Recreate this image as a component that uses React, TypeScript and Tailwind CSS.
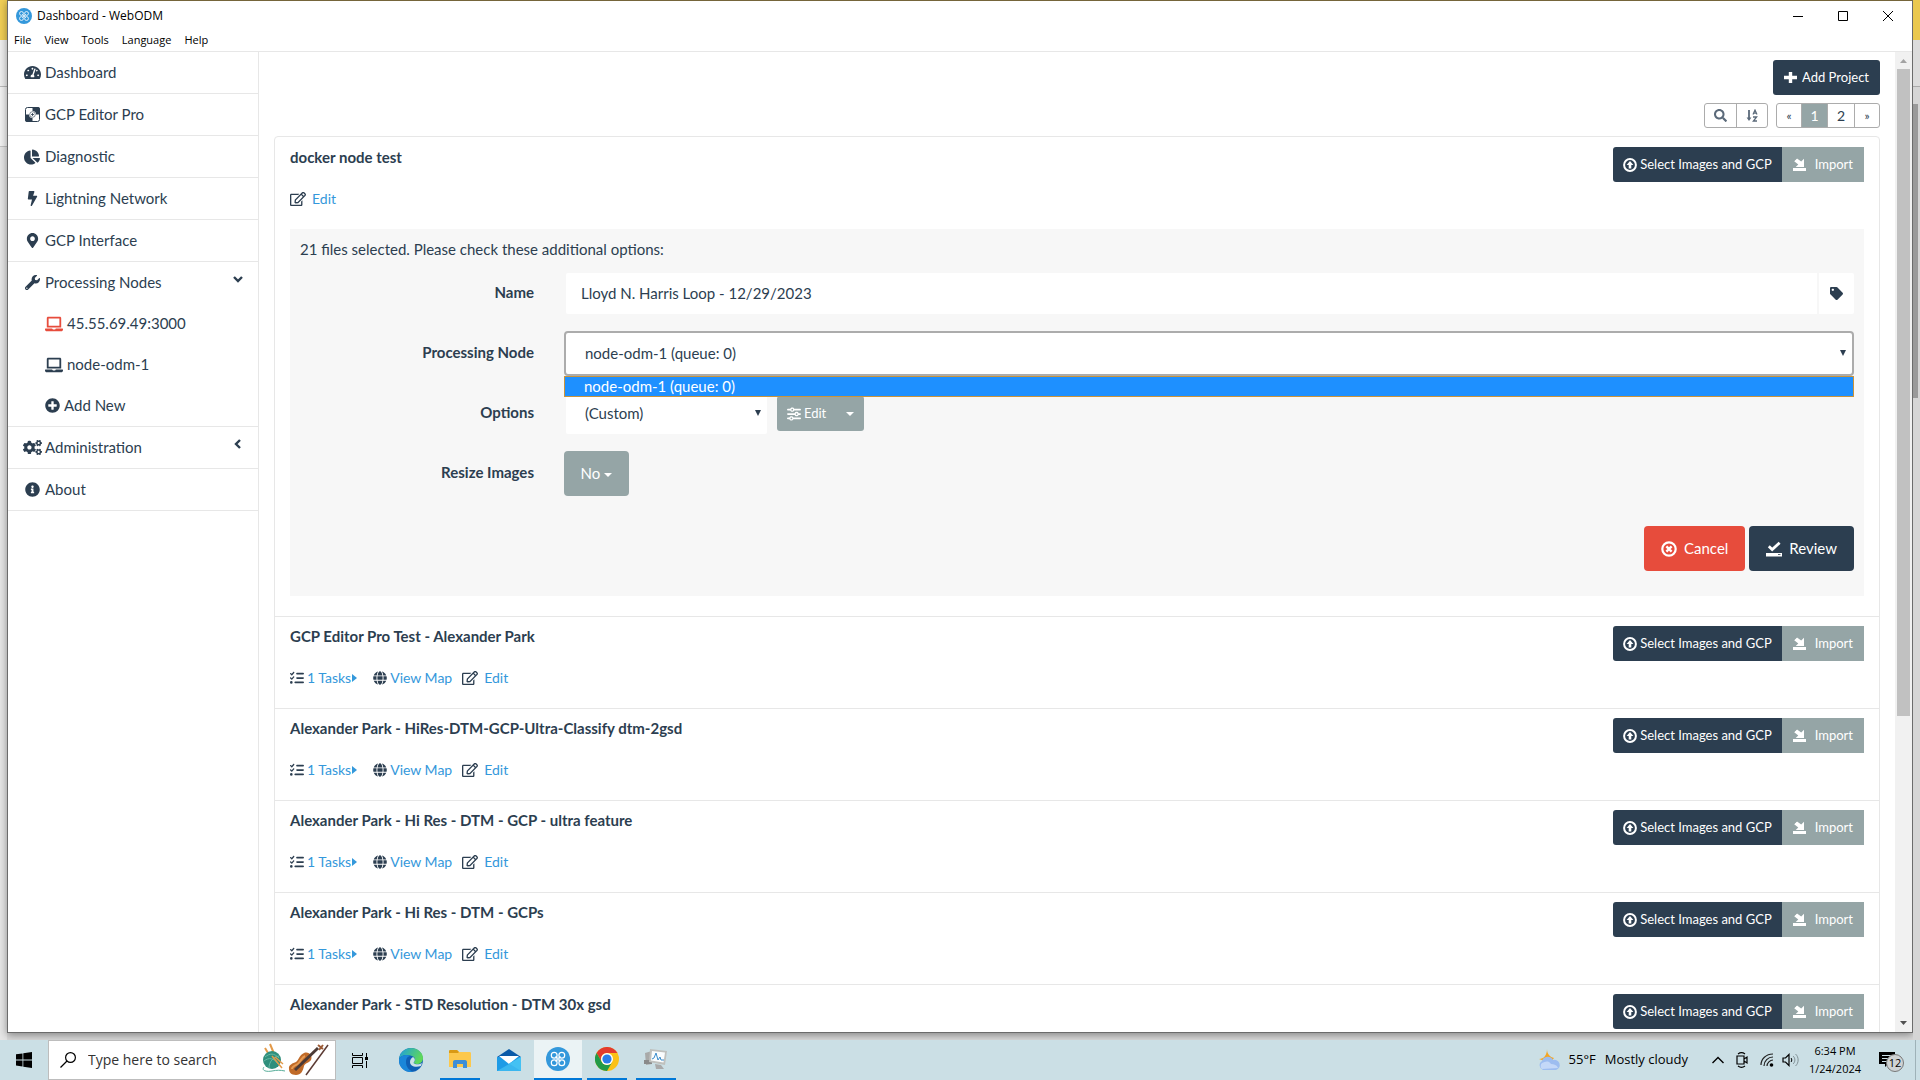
import type { ReactNode } from 'react';
import {
  FaBolt,
  FaChartPie,
  FaCogs,
  FaGlobe,
  FaInfoCircle,
  FaLaptop,
  FaMapMarkerAlt,
  FaPlusCircle,
  FaRegEdit,
  FaSearch,
  FaTachometerAlt,
  FaTag,
  FaWrench,
} from 'react-icons/fa';
import { FaListCheck, FaSliders } from 'react-icons/fa6';

// ─── Data ──────────────────────────────────────────────────────────────────

const MENUS = ['File', 'View', 'Tools', 'Language', 'Help'];

const PROJECTS = [
  { name: 'GCP Editor Pro Test - Alexander Park', tasks: 1 },
  { name: 'Alexander Park - HiRes-DTM-GCP-Ultra-Classify dtm-2gsd', tasks: 1 },
  { name: 'Alexander Park - Hi Res - DTM - GCP - ultra feature', tasks: 1 },
  { name: 'Alexander Park - Hi Res - DTM - GCPs', tasks: 1 },
  { name: 'Alexander Park - STD Resolution - DTM 30x gsd', tasks: 0 },
];

// ─── Icons ─────────────────────────────────────────────────────────────────

function WebOdmLogo({ size }: { size: number }) {
  return (
    <svg width={size} height={size} viewBox="0 0 24 24">
      <circle cx="12" cy="12" r="12" fill="#3498db" />
      <g fill="none" stroke="#fff" strokeWidth="1.2">
        <circle cx="8.2" cy="8.2" r="2.9" />
        <circle cx="15.8" cy="8.2" r="2.9" />
        <circle cx="8.2" cy="15.8" r="2.9" />
        <circle cx="15.8" cy="15.8" r="2.9" />
        <path d="M9.500 9.500l1.500 1.500M14.500 9.500L13 11M9.500 14.500L11 13M14.500 14.500L13 13M11 11h2v2h-2z" />
      </g>
    </svg>
  );
}

function TargetIcon() {
  return (
    <svg width="15" height="15" viewBox="0 0 15 15">
      <rect x="0.5" y="0.5" width="14" height="14" rx="2" fill="#fff" stroke="#2c3e50" />
      <path d="M7.5 0H13a2 2 0 0 1 2 2v5.500H7.500z M0 7.500h7.500V15H2a2 2 0 0 1-2-2z" fill="#2c3e50" />
      <circle cx="7.500" cy="7.500" r="3.500" fill="#fff" />
      <circle cx="7.500" cy="7.500" r="2.800" fill="none" stroke="#2c3e50" strokeWidth="0.600" />
      <path d="M7.500 6v3M6 7.500h3" stroke="#2c3e50" strokeWidth="0.800" />
    </svg>
  );
}

function UploadIcon() {
  return (
    <svg width="14" height="14" viewBox="0 0 14 14">
      <circle cx="7" cy="7" r="5.900" fill="none" stroke="#fff" strokeWidth="2" />
      <path d="M7 3l3.400 4H8.300v3.500H5.700V7H3.600z" fill="#fff" />
    </svg>
  );
}

function ImportIcon() {
  return (
    <svg width="13" height="13" viewBox="0 0 13 13" fill="#fff">
      <path d="M0 10h13v3H0z M11 .7V9H2.700l2.600-2.600L1.200 3.200 4 .4l4.200 3.100z" />
      <path d="M1 2.600L3.600 0" stroke="#95a5a6" strokeWidth="0.800" />
    </svg>
  );
}

function CancelIcon() {
  return (
    <svg width="16" height="16" viewBox="0 0 16 16" fill="none" stroke="#fff">
      <circle cx="8" cy="8" r="6.700" strokeWidth="2.200" />
      <path d="M5.400 5.400l5.200 5.200M10.600 5.400l-5.200 5.200" strokeWidth="2.400" />
    </svg>
  );
}

function SavedIcon() {
  return (
    <svg width="16" height="16" viewBox="0 0 16 16">
      <path d="M2.800 5.200l3.400 3.300L13.600 1.800" fill="none" stroke="#fff" strokeWidth="2.800" />
      <path d="M0 12h16v3.500H0z" fill="#fff" />
      <path d="M12 13.500h2.500" stroke="#2c3e50" strokeWidth="0.800" />
    </svg>
  );
}

function PlusIcon() {
  return (
    <svg width="13" height="13" viewBox="0 0 13 13">
      <path d="M6.500 1v11M0 6.500h13" stroke="#fff" strokeWidth="3.400" />
    </svg>
  );
}

function SortIcon() {
  return (
    <svg width="12" height="13" viewBox="0 0 12 13" fill="none" stroke="#5b6a7a">
      <path d="M3 1v9" strokeWidth="1.800" />
      <path d="M.6 8.500h4.800L3 12z" fill="#5b6a7a" stroke="none" />
      <path d="M7 5.500L9 1l2 4.500M7.600 4.200h2.800" strokeWidth="1.200" />
      <path d="M7 8h3.600L7.400 12H11" strokeWidth="1.300" />
    </svg>
  );
}

function Chevron({ down }: { down?: boolean }) {
  return (
    <svg width="10" height="10" viewBox="0 0 10 10" fill="none" stroke="#2c3e50" strokeWidth="2.400">
      <path d={down ? 'M1 3l4 4 4-4' : 'M7 1L3 5l4 4'} />
    </svg>
  );
}

function Caret({ className }: { className?: string }) {
  return (
    <svg className={className} width="8" height="4" viewBox="0 0 8 4">
      <path d="M0 0h8L4 4z" fill="currentColor" />
    </svg>
  );
}

function SelectArrow() {
  return (
    <svg className="pointer-events-none absolute right-[8px] top-[19px]" width="6" height="6" viewBox="0 0 6 6">
      <path d="M0 0h6L3 6z" fill="#2c3e50" />
    </svg>
  );
}

// ─── Sidebar ───────────────────────────────────────────────────────────────

function NavItem({ icon, label, arrow, children }: { icon: ReactNode; label: string; arrow?: ReactNode; children?: ReactNode }) {
  return (
    <li className="border-b border-[#e7e7e7]">
      <a href="#" className="flex h-[41px] items-center px-[15px]">
        <span className="flex w-[18px] justify-center">{icon}</span>
        <span className="ml-1">{label}</span>
        {arrow && <span className="mb-2 ml-auto">{arrow}</span>}
      </a>
      {children}
    </li>
  );
}

function SubItem({ icon, label }: { icon: ReactNode; label: string }) {
  return (
    <li>
      <a href="#" className="flex h-[41px] items-center gap-1 pl-[37px]">
        {icon}
        {label}
      </a>
    </li>
  );
}

function Sidebar() {
  return (
    <nav className="w-[251px] shrink-0 border-r border-[#e7e7e7]">
      <ul>
        <NavItem icon={<FaTachometerAlt size={17} />} label="Dashboard" />
        <NavItem icon={<TargetIcon />} label="GCP Editor Pro" />
        <NavItem icon={<FaChartPie size={16} />} label="Diagnostic" />
        <NavItem icon={<FaBolt size={15} />} label="Lightning Network" />
        <NavItem icon={<FaMapMarkerAlt size={15} />} label="GCP Interface" />
        <NavItem icon={<FaWrench size={15} />} label="Processing Nodes" arrow={<Chevron down />}>
          <ul>
            <SubItem icon={<FaLaptop size={18} color="#e74c3c" />} label="45.55.69.49:3000" />
            <SubItem icon={<FaLaptop size={18} />} label="node-odm-1" />
            <SubItem icon={<FaPlusCircle size={15} />} label="Add New" />
          </ul>
        </NavItem>
        <NavItem icon={<FaCogs size={19} className="shrink-0" />} label="Administration" arrow={<Chevron />} />
        <NavItem icon={<FaInfoCircle size={15} />} label="About" />
      </ul>
    </nav>
  );
}

// ─── Projects ──────────────────────────────────────────────────────────────

function ProjectActions({ tasks }: { tasks: number }) {
  return (
    <div className="mt-5 flex h-[22px] items-center text-sm text-[#3498db]">
      {tasks > 0 && (
        <>
          <FaListCheck size={14} color="#2c3e50" />
          <a href="#" className="ml-[3px] flex items-center gap-px">
            {tasks} Tasks
            <svg width="5" height="8" viewBox="0 0 5 8">
              <path d="M0 0l5 4-5 4z" fill="#3498db" />
            </svg>
          </a>
          <FaGlobe size={14} color="#2c3e50" className="ml-4" />
          <a href="#" className="ml-[3px] mr-[10px]">View Map</a>
        </>
      )}
      <FaRegEdit size={16} color="#2c3e50" />
      <a href="#" className="ml-[6px]">Edit</a>
    </div>
  );
}

function ProjectHeader({ name, children }: { name: string; children?: ReactNode }) {
  return (
    <div className="flex items-start justify-between">
      <div>
        <h3 className="font-bold leading-[21px]">{name}</h3>
        {children}
      </div>
      <div className="flex h-[35px] text-[13px] text-white">
        <button className="flex items-center gap-[3px] rounded-l-[3px] bg-[#2c3e50] px-[10px]">
          <UploadIcon />
          Select Images and GCP
        </button>
        <button className="flex items-center gap-[9px] bg-[#95a5a6] px-[11px]">
          <ImportIcon />
          Import
        </button>
      </div>
    </div>
  );
}

function FormRow({ label, htmlFor, children }: { label: string; htmlFor: string; children: ReactNode }) {
  return (
    <div className="-mx-[15px] flex">
      <label htmlFor={htmlFor} className="w-1/6 px-[15px] pt-[11px] text-right font-bold leading-[21px]">
        {label}
      </label>
      <div className="flex h-[45px] w-5/6 items-center px-[15px]">{children}</div>
    </div>
  );
}

function NewTaskForm() {
  return (
    <form className="mt-[19px] bg-[#f7f7f7] px-[10px] pb-[25px] pt-[10px]">
      <p className="mb-[11px] leading-[21px]">21 files selected. Please check these additional options:</p>
      <div className="flex flex-col gap-[15px]">
        <FormRow label="Name" htmlFor="task-name">
          <div className="flex h-[41px] flex-1 gap-[2px] pl-[2px]">
            <input id="task-name" type="text" defaultValue="Lloyd N. Harris Loop - 12/29/2023" className="flex-1 rounded-l-[2px] bg-white px-[15px] outline-none" />
            <button type="button" aria-label="Tags" className="flex w-[35px] items-center justify-center rounded-r-[2px] bg-white">
              <FaTag size={13} />
            </button>
          </div>
        </FormRow>

        <FormRow label="Processing Node" htmlFor="processing-node">
          <div className="relative h-[45px] flex-1">
            <select id="processing-node" className="h-full w-full appearance-none rounded-[4px] border-2 border-[#acacac] bg-white px-[19px] outline-none">
              <option>node-odm-1 (queue: 0)</option>
            </select>
            <SelectArrow />
            <ul role="listbox" className="absolute inset-x-0 top-full z-10 border border-[#c9943c] bg-[#1e90ff] text-white">
              <li role="option" aria-selected="true" className="px-[19px] leading-[19px]">node-odm-1 (queue: 0)</li>
            </ul>
          </div>
        </FormRow>

        <FormRow label="Options" htmlFor="options">
          <div className="relative mr-2 h-[45px] w-[205px] p-[2px]">
            <select id="options" className="h-full w-full appearance-none rounded-[2px] bg-white px-[19px] outline-none">
              <option>(Custom)</option>
            </select>
            <SelectArrow />
          </div>
          <div className="flex h-[35px] overflow-hidden rounded-[3px] bg-[#95a5a6] text-[13px] text-white">
            <button type="button" className="flex items-center gap-[3px] px-[10px]">
              <FaSliders size={14} />
              Edit
            </button>
            <button type="button" aria-label="More options" className="px-[10px]">
              <Caret />
            </button>
          </div>
        </FormRow>

        <FormRow label="Resize Images" htmlFor="resize">
          <button id="resize" type="button" className="flex h-full w-[65px] items-center justify-center gap-1 rounded-[4px] bg-[#95a5a6] text-white">
            No
            <Caret className="mt-[2px]" />
          </button>
        </FormRow>
      </div>

      <div className="mt-[30px] flex justify-end gap-1 text-white">
        <button type="button" className="flex h-[45px] items-center gap-[7px] rounded-[4px] bg-[#e74c3c] px-[17px]">
          <CancelIcon />
          Cancel
        </button>
        <button type="button" className="flex h-[45px] items-center gap-[7px] rounded-[4px] bg-[#2c3e50] px-[17px]">
          <SavedIcon />
          Review
        </button>
      </div>
    </form>
  );
}

function Toolbar() {
  const cell = 'flex items-center justify-center border-r border-[#acacac] last:border-r-0';
  return (
    <div className="mb-2 flex flex-col items-end gap-2">
      <button className="flex h-[35px] items-center gap-[5px] rounded-[3px] bg-[#2c3e50] px-[11px] text-[13px] text-white">
        <PlusIcon />
        Add Project
      </button>
      <div className="flex h-[25px] gap-2 text-sm">
        <div className="flex overflow-hidden rounded-[3px] border border-[#acacac]">
          <button aria-label="Search" className={`w-8 ${cell}`}>
            <FaSearch size={13} color="#5b6a7a" />
          </button>
          <button aria-label="Sort" className={`w-[30px] ${cell}`}>
            <SortIcon />
          </button>
        </div>
        <div className="flex overflow-hidden rounded-[3px] border border-[#acacac]">
          <a href="#" className={`w-[25px] text-xs ${cell}`}>«</a>
          <a href="#" className={`w-[26px] bg-[#95a5a6] text-white ${cell}`}>1</a>
          <a href="#" className={`w-[27px] ${cell}`}>2</a>
          <a href="#" className={`w-6 text-xs ${cell}`}>»</a>
        </div>
      </div>
    </div>
  );
}

// ─── Window chrome ─────────────────────────────────────────────────────────

function TitleBar() {
  return (
    <header className="h-[51px] shrink-0 border-b border-[#e7e7e7] font-['Open_Sans',sans-serif] text-xs text-black">
      <div className="flex h-[29px] items-center pl-2">
        <WebOdmLogo size={16} />
        <span className="ml-[5px]">Dashboard - WebODM</span>
        <div className="ml-auto mr-[19px] flex gap-[35px]">
          <button aria-label="Minimize">
            <svg width="10" height="10" viewBox="0 0 10 10"><path d="M0 5.500h10" stroke="#000" /></svg>
          </button>
          <button aria-label="Maximize">
            <svg width="10" height="10" viewBox="0 0 10 10"><path d="M.5.5h9v9h-9z" fill="none" stroke="#000" /></svg>
          </button>
          <button aria-label="Close">
            <svg width="10" height="10" viewBox="0 0 10 10"><path d="M0 0l10 10M10 0L0 10" stroke="#000" /></svg>
          </button>
        </div>
      </div>
      <div className="flex h-[21px] items-center gap-[13px] pl-[6px] text-[11px]">
        {MENUS.map((menu) => (
          <button key={menu}>{menu}</button>
        ))}
      </div>
    </header>
  );
}

function Scrollbar() {
  return (
    <div className="flex w-[17px] shrink-0 flex-col items-center bg-[#f1f1f1]">
      <svg className="shrink-0" width="17" height="17" viewBox="0 0 17 17"><path d="M5 11h7L8.500 7z" fill="#a3a3a3" /></svg>
      <div className="h-[66%] w-[13px] bg-[#c1c1c1]" />
      <svg className="mt-auto shrink-0" width="17" height="17" viewBox="0 0 17 17"><path d="M5 6h7l-3.500 4z" fill="#505050" /></svg>
    </div>
  );
}

// ─── Taskbar ───────────────────────────────────────────────────────────────

function Slot({ label, open, active, children }: { label: string; open?: boolean; active?: boolean; children: ReactNode }) {
  return (
    <button aria-label={label} className={`flex h-10 w-12 flex-col items-center ${active ? 'bg-[#ebf3f5]' : ''}`}>
      <span className="flex flex-1 items-center">{children}</span>
      {open && <span className={`h-[2px] bg-[#0078d7] ${active ? 'w-12' : 'w-10'}`} />}
    </button>
  );
}

function SearchArt() {
  return (
    <svg width="68" height="34" viewBox="0 0 68 34">
      <path d="M4 5l6 10M9 1l5 12" stroke="#e39a4a" strokeWidth="2" />
      <circle cx="11" cy="17" r="9" fill="#2f8f7c" />
      <path d="M4 14c5-4 9-4 14 1M3 18c5-4 10-3 14 3M8 25c0-6 4-11 10-12" fill="none" stroke="#66b9a4" />
      <path d="M14 14l8 7M11 13l10 12" stroke="#e39a4a" strokeWidth="1.500" />
      <path d="M3 24c-3 4 3 5 8 4s8-1 13 0" fill="none" stroke="#58ae9a" />
      <path d="M28 26c-1-4 4-6 7-7 3-2 3-7 8-9 5-2 9 3 7 7-2 3-6 3-7 6-1 5-3 9-8 9s-7-3-7-6z" fill="#c06a28" />
      <path d="M31 26c0-3 4-4 6-5 3-3 4-7 7-8" fill="none" stroke="#e59a52" strokeWidth="2" />
      <path d="M34 27L57 5" stroke="#4b3a36" strokeWidth="3" />
      <path d="M57 2l5 4M58 7l4-5" stroke="#9b5a35" strokeWidth="2" />
      <path d="M45 32L67 2" stroke="#5b3a33" strokeWidth="1.500" />
    </svg>
  );
}

function EdgeIcon() {
  return (
    <svg width="24" height="24" viewBox="0 0 24 24">
      <defs>
        <linearGradient id="edge-top" x1="0" y1="0" x2="1" y2="0.4">
          <stop offset="0" stopColor="#1b9de2" />
          <stop offset="1" stopColor="#5fd85a" />
        </linearGradient>
      </defs>
      <circle cx="12" cy="12" r="12" fill="#0f5fb4" />
      <path d="M0 11C1 4 6 0 12 0c7 0 12 5 12 10 0 4-3 6-6 6-2 0-4-1-3-2 2-2 1-5-2-6C8 6 2 7 0 11z" fill="url(#edge-top)" />
      <path d="M0 11c2-4 8-5 12-3-3 0-5 2-5 6 0 5 3 8 7 10C6 25-1 19 0 11z" fill="#1a86d9" />
      <path d="M11 14c0 4 5 6 11 4l1-3c-2 1.500-5 1.500-7 1-1-.5-2-1-1-2 1.500-1.500 1-4-1-5-2 1-3 3-3 5z" fill="#cde1e7" />
    </svg>
  );
}

function Taskbar() {
  return (
    <footer className="flex h-10 shrink-0 bg-[#cbdfe5] font-['Open_Sans',sans-serif] text-black">
      <button aria-label="Start" className="flex w-12 items-center justify-center">
        <svg width="16" height="16" viewBox="0 0 16 16">
          <path d="M0 2.300l6.500-.9v6.100H0zM7.300 1.300L16 0v7.500H7.300zM0 8.400h6.500v6.100L0 13.600zM7.300 8.400H16V16l-8.700-1.300z" />
        </svg>
      </button>
      <label className="flex w-[288px] items-center border border-[#bdbdbd] bg-white pl-[11px]">
        <svg width="16" height="16" viewBox="0 0 16 16" fill="none" stroke="#000" strokeWidth="1.200">
          <circle cx="10.500" cy="5.500" r="4.900" />
          <path d="M7 9l-6.500 6.500" />
        </svg>
        <input type="text" placeholder="Type here to search" className="ml-3 w-[160px] text-sm outline-none placeholder:text-[#333]" />
        <span className="ml-auto mr-[6px]"><SearchArt /></span>
      </label>
      <button aria-label="Task View" className="flex w-12 items-center justify-center">
        <svg width="16" height="15" viewBox="0 0 16 15" fill="none" stroke="#000">
          <path d="M.5 0v2.500h10V0M.5 4.500h10v6H.5zM.5 15v-2.500h10V15M14.500 0v4M14.500 8v7" />
          <path d="M13 4h3v3h-3z" fill="#000" stroke="none" />
        </svg>
      </button>
      <div className="ml-[3px] flex gap-px">
        <Slot label="Edge"><EdgeIcon /></Slot>
        <Slot label="File Explorer" open>
          <svg width="22" height="19" viewBox="0 0 22 19">
            <path d="M0 1.500C0 .5.500 0 1.500 0H8l2 2h10.500c1 0 1.500.5 1.500 1.500V17H0z" fill="#fcc84c" />
            <path d="M0 3V1.500C0 .5.500 0 1.500 0H8l2 2-1 1z" fill="#d99a14" />
            <path d="M4 18V12c0-1 .5-2 2-2h10c1.500 0 2 1 2 2v6h-4v-4H8v4z" fill="#3d8fd8" />
          </svg>
        </Slot>
        <Slot label="Mail">
          <svg width="24" height="22" viewBox="0 0 24 22">
            <path d="M0 8l12-8 12 8z" fill="#0a5aa8" />
            <path d="M0 8h24v14H0z" fill="#1e9be6" />
            <path d="M2 7h20l-10 8z" fill="#fff" />
            <path d="M24 8v14L12 14.500z" fill="#38b6f1" />
            <path d="M0 22L24 8v14z" fill="#4cc8f5" opacity="0.600" />
          </svg>
        </Slot>
        <Slot label="WebODM" open active><WebOdmLogo size={24} /></Slot>
        <Slot label="Chrome" open>
          <svg width="24" height="24" viewBox="0 0 24 24">
            <circle cx="12" cy="12" r="12" fill="#fbc116" />
            <path d="M1.600 6A12 12 0 0 1 22.400 6H12a6 6 0 0 0-5.200 9z" fill="#e33b2e" />
            <path d="M1.600 6A12 12 0 0 0 12 24l5.200-9A6 6 0 0 1 6.800 15z" fill="#229a48" />
            <circle cx="12" cy="12" r="6" fill="#fff" />
            <circle cx="12" cy="12" r="4.600" fill="#2b7de9" />
          </svg>
        </Slot>
        <Slot label="System monitor" open>
          <svg width="24" height="22" viewBox="0 0 24 22">
            <path d="M1 5l7-2v13l-6 1z" fill="#a9aaa9" />
            <path d="M0 12h8v4H0z" fill="#8a8a8a" />
            <path d="M6 1l17 2-2 14L5 14z" fill="#bfc0bd" />
            <path d="M8 3l13 1.500-1.500 10L7 12.500z" fill="#fafcfd" />
            <path d="M8 11l2-1 2-5 2 7 2-3 1 3 3 0" fill="none" stroke="#3a8ccc" />
            <path d="M11 16l6 1 3 4h-8z" fill="#a9a9a9" />
          </svg>
        </Slot>
      </div>

      <div className="ml-auto flex items-center">
        <svg width="24" height="24" viewBox="0 0 24 24">
          <path d="M10 1c0 5 3 8 7 9l-4 5-11-4C7 11 10 7 10 1z" fill="#f5a623" />
          <path d="M6 22a5 5 0 0 1-1-9 6 6 0 0 1 11-1 5 5 0 0 1 3 10z" fill="#9dbdf0" />
          <path d="M5 21a4 4 0 0 1 0-6c3-1 6-3 9 1 3 0 6 1 7 4z" fill="#c4d8f8" />
        </svg>
        <span className="ml-2 text-[13px]">55°F</span>
        <span className="ml-[9px] text-[13px]">Mostly cloudy</span>
        <svg className="ml-6" width="12" height="8" viewBox="0 0 12 8" fill="none" stroke="#000" strokeWidth="1.400"><path d="M.5 7L6 1.500 11.500 7" /></svg>
        <svg className="ml-3" width="12" height="16" viewBox="0 0 12 16" fill="none" stroke="#000" strokeWidth="1.200">
          <path d="M1 4h7v8H1zM8 7l3-2v6L8 9M2 2c2-1.500 5-1.500 7 0M2 14c2 1.500 5 1.500 7 0" />
        </svg>
        <svg className="ml-3" width="14" height="14" viewBox="0 0 14 14" fill="none" stroke="#222">
          <path d="M1 12C1 6 6 1 13 1M4 13c0-5 4-9 9-9M7 13c0-3 3-6 6-6" strokeWidth="1.200" />
          <circle cx="11.500" cy="12" r="1.800" fill="#000" stroke="none" />
        </svg>
        <svg className="ml-2" width="17" height="14" viewBox="0 0 17 14" fill="none" stroke="#000">
          <path d="M1 5h2.500L7 1.500v11L3.500 9H1z" strokeWidth="1.200" />
          <path d="M9 5c1 1 1 3 0 4" />
          <path d="M11 3c2.500 2 2.500 6 0 8M13.500 1c3.500 3 3.500 9 0 12" stroke="#819196" />
        </svg>
        <div className="ml-[9px] w-[54px] text-center text-[11px] leading-[18px]">
          <div>6:34 PM</div>
          <div>1/24/2024</div>
        </div>
        <button aria-label="Notifications" className="relative ml-[17px] mr-[11px] h-6 w-[25px]">
          <svg width="16" height="16" viewBox="0 0 16 16">
            <path d="M0 0h16v12H9l-3 3v-3H0z" />
            <path d="M3 3.500h10M3 6.500h10M3 9.500h6" stroke="#cbdfe5" />
          </svg>
          <span className="absolute bottom-0 right-0 flex size-[18px] items-center justify-center rounded-full border border-[#777] bg-[#cfd3d4] text-[11px]">12</span>
        </button>
        <div className="mr-1 h-10 w-px bg-[#9fb2b8]" />
      </div>
    </footer>
  );
}

// ─── Page ──────────────────────────────────────────────────────────────────

export default function App() {
  return (
    <div className="flex h-screen flex-col overflow-hidden bg-[#dadada] font-[Lato,sans-serif] text-[15px] text-[#2c3e50]">
      <div className="flex min-h-0 flex-1">
        {/* Windows peeking out behind this one */}
        <div className="w-[7px] bg-[#e6e6e6]">
          <div className="h-10 bg-[#f1cf55]" />
          <div className="h-[47px] border-b border-[#bbb] bg-[#efefef]" />
          <div className="h-[60px] border-b border-[#c4c4c4] bg-[#f2f2f2]" />
        </div>
        <div className="mb-[7px] flex min-w-0 flex-1 flex-col border border-[#6b6b6b] border-t-[#75653a] bg-white shadow-[0_2px_8px_rgba(0,0,0,0.4)]">
          <TitleBar />
          <div className="flex min-h-0 flex-1">
            <Sidebar />
            <main className="min-w-0 flex-1 overflow-hidden px-[15px] pt-2">
              <Toolbar />
              <ul className="rounded-t-[4px] border border-[#e7e7e7]">
                <li className="px-[15px] pb-5 pt-[10px]">
                  <ProjectHeader name="docker node test">
                    <ProjectActions tasks={0} />
                  </ProjectHeader>
                  <NewTaskForm />
                </li>
                {PROJECTS.map(({ name, tasks }) => (
                  <li key={name} className="border-t border-[#e7e7e7] px-[15px] pb-[19px] pt-[9px]">
                    <ProjectHeader name={name}>{tasks > 0 && <ProjectActions tasks={tasks} />}</ProjectHeader>
                  </li>
                ))}
              </ul>
            </main>
            <Scrollbar />
          </div>
        </div>
        <div className="w-[7px] bg-[#d5d5d5]">
          <div className="h-10 bg-[#eac84f]" />
          <div className="h-[47px] border-b border-[#aaa] bg-[#dcdcdc]" />
          <div className="mt-[17px] h-[294px] w-[5px] bg-[#9a9a9a]" />
        </div>
      </div>
      <Taskbar />
    </div>
  );
}
